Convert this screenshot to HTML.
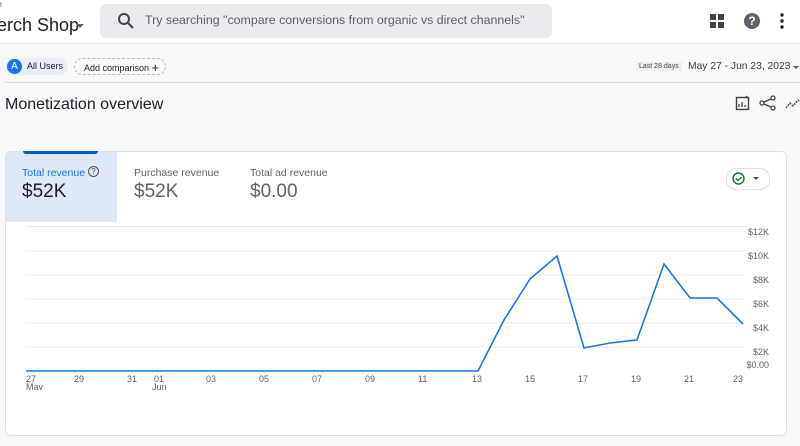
<!DOCTYPE html>
<html><head><style>
body{margin:0;width:800px;height:446px;overflow:hidden;background:#f8f9fa;font-family:"Liberation Sans",sans-serif;position:relative;color:#202124}
.top{position:absolute;left:0;top:0;width:800px;height:43px;background:#fff;border-bottom:1px solid #e3e3e3}
.a{position:absolute;white-space:nowrap}
</style></head><body>
<div class="top">
<div class="a" style="left:0;top:2px;font-size:7px;color:#5f6368">t</div>
<div class="a" style="left:-3px;top:15px;font-size:18px;color:#202124">erch Shop</div>
<div class="a" style="left:76px;top:24px;width:0;height:0;border-left:4px solid transparent;border-right:4px solid transparent;border-top:4px solid #5f6368"></div>
<div class="a" style="left:100px;top:4px;width:452px;height:34px;background:#eaebef;border-radius:6px"></div>
<svg class="a" style="left:117px;top:12px" width="18" height="18" viewBox="0 0 18 18"><circle cx="7" cy="7" r="5" fill="none" stroke="#444" stroke-width="2"/><path d="M11 11l5 5" stroke="#444" stroke-width="2"/></svg>
<div class="a" style="left:145px;top:13px;font-size:12.4px;color:#5f6368">Try searching "compare conversions from organic vs direct channels"</div>
<svg class="a" style="left:710px;top:14px" width="14" height="14"><rect x="0" y="0" width="6" height="6" fill="#444"/><rect x="8" y="0" width="6" height="6" fill="#444"/><rect x="0" y="8" width="6" height="6" fill="#444"/><rect x="8" y="8" width="6" height="6" fill="#444"/></svg>
<div class="a" style="left:744px;top:13px;width:16px;height:16px;border-radius:50%;background:#5f6368;color:#fff;font-size:12px;font-weight:bold;text-align:center;line-height:16px">?</div>
<svg class="a" style="left:780px;top:13px" width="4" height="16"><circle cx="2" cy="2" r="1.7" fill="#222"/><circle cx="2" cy="8" r="1.7" fill="#222"/><circle cx="2" cy="14" r="1.7" fill="#222"/></svg>
</div>
<div class="a" style="left:6px;top:58px;width:62px;height:17px;border-radius:9px;background:#e8eefa"></div>
<div class="a" style="left:7px;top:59px;width:15px;height:15px;border-radius:50%;background:#1a73e8;color:#fff;font-size:10px;text-align:center;line-height:15px">A</div>
<div class="a" style="left:27px;top:61px;font-size:9px">All Users</div>
<div class="a" style="left:74px;top:58px;border:1px dashed #bbb;border-radius:9px;font-size:9px;line-height:15px;padding-left:9px;box-sizing:border-box;width:92px;height:17px">Add comparison <span style="font-size:13px;position:relative;top:1px">+</span></div>
<div class="a" style="left:5px;top:82px;width:795px;height:1px;background:#dadce0"></div>
<div class="a" style="left:636px;top:62px;background:#eceef0;font-size:7px;color:#444;padding:1px 3px">Last 28 days</div>
<div class="a" style="left:688px;top:61px;font-size:10.3px;color:#3c4043">May 27 - Jun 23, 2023</div>
<div class="a" style="left:793px;top:66px;border-left:3px solid transparent;border-right:3px solid transparent;border-top:3px solid #555"></div>
<div class="a" style="left:5px;top:96px;font-size:16px">Monetization overview</div>
<svg class="a" style="left:735px;top:95px" width="66" height="16" viewBox="0 0 66 16"><rect x="1.5" y="2.5" width="12" height="12" fill="none" stroke="#444" stroke-width="1.4"/><path d="M4 12V9M7 12V7M10 12V10M11 1l3 3" stroke="#444" stroke-width="1.4"/><circle cx="38" cy="3" r="2" fill="none" stroke="#444" stroke-width="1.3"/><circle cx="27" cy="8" r="2" fill="none" stroke="#444" stroke-width="1.3"/><circle cx="38" cy="13" r="2" fill="none" stroke="#444" stroke-width="1.3"/><path d="M29 7l7-3M29 9l7 3" stroke="#444" stroke-width="1.3"/><path d="M51 13l4-5 3 3 5-6 3 2" fill="none" stroke="#444" stroke-width="1.4" stroke-dasharray="2 1"/></svg>
<div class="a" style="left:5px;top:151px;width:780px;height:283px;background:#fff;border:1px solid #e0e0e0;border-radius:6px"></div>
<div class="a" style="left:6px;top:152px;width:111px;height:70px;background:#dfe8f7"></div>
<div class="a" style="left:23px;top:151px;width:75px;height:3px;background:#0b57d0;border-radius:0 0 3px 3px"></div>
<div class="a" style="left:22px;top:167px;font-size:10.5px;color:#1a73e8">Total revenue</div>
<div class="a" style="left:88px;top:166px;width:9px;height:9px;border:1px solid #555;border-radius:50%;font-size:8px;text-align:center;line-height:9px;color:#555">?</div>
<div class="a" style="left:22px;top:181px;font-size:19px">$52K</div>
<div class="a" style="left:134px;top:167px;font-size:10.5px;color:#5f6368">Purchase revenue</div>
<div class="a" style="left:134px;top:181px;font-size:19px;color:#5f6368">$52K</div>
<div class="a" style="left:250px;top:167px;font-size:10.5px;color:#5f6368">Total ad revenue</div>
<div class="a" style="left:250px;top:181px;font-size:19px;color:#5f6368">$0.00</div>
<div class="a" style="left:726px;top:168px;width:42px;height:20px;border:1px solid #e0e0e0;border-radius:10px"></div>
<svg class="a" style="left:732px;top:172px" width="30" height="13"><circle cx="6.5" cy="6.5" r="5.5" fill="none" stroke="#137333" stroke-width="1.4"/><path d="M4 6.5l2 2 3.5-3.5" fill="none" stroke="#137333" stroke-width="1.4"/><path d="M21 5h6l-3 3z" fill="#444"/></svg>
<div class="a" style="left:26px;top:226px;width:720px;height:1px;background:#e8e8e8"></div>
<svg class="a" style="left:0;top:220px" width="800" height="170">
<g stroke="#ebebeb"><line x1="26" x2="745" y1="31" y2="31"/><line x1="26" x2="745" y1="55" y2="55"/><line x1="26" x2="745" y1="79" y2="79"/><line x1="26" x2="745" y1="103" y2="103"/><line x1="26" x2="745" y1="127" y2="127"/></g>
<g font-size="9" fill="#5f6368" font-family="Liberation Sans" text-anchor="end"><text x="769" y="15">$12K</text><text x="769" y="39">$10K</text><text x="769" y="63">$8K</text><text x="769" y="87">$6K</text><text x="769" y="111">$4K</text><text x="769" y="135">$2K</text><text x="769" y="148">$0.00</text></g>
<polyline fill="none" stroke="#1a73e8" stroke-width="1.6" points="26,151 478,151 504,100 530,59 557,36 584,128 610,123 637,120 664,44 690,78 717,78 743,104"/>
<g font-size="9" fill="#5f6368" font-family="Liberation Sans"><text x="26" y="162">27</text><text x="26" y="170">May</text><text x="74" y="162">29</text><text x="127" y="162">31</text><text x="154" y="162">01</text><text x="152" y="170">Jun</text><text x="206" y="162">03</text><text x="259" y="162">05</text><text x="312" y="162">07</text><text x="365" y="162">09</text><text x="418" y="162">11</text><text x="472" y="162">13</text><text x="525" y="162">15</text><text x="578" y="162">17</text><text x="631" y="162">19</text><text x="684" y="162">21</text><text x="733" y="162">23</text></g>
</svg>
</body></html>
